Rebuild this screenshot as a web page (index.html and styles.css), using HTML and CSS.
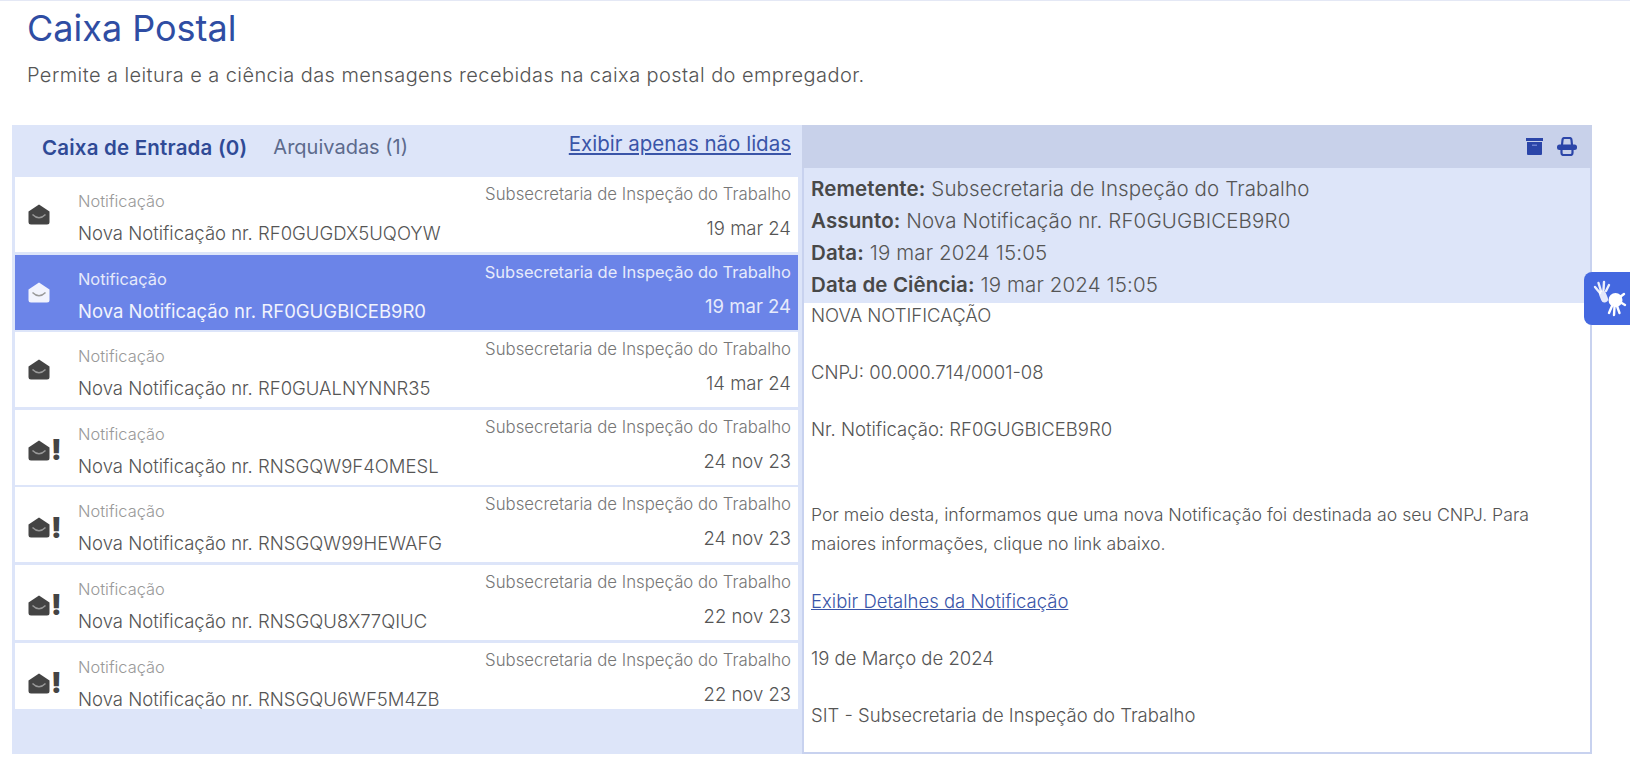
FILE: index.html
```html
<!DOCTYPE html>
<html lang="pt-BR">
<head>
	<meta charset="UTF-8">
	<title>Caixa Postal</title>
	<link rel="stylesheet" href="styles.css">
</head>
<body>
	<svg class="defs" width="0" height="0">
		<symbol id="env" viewBox="0 0 22 21">
			<path fill="currentColor" d="M11 0.5 L21.5 7.5 V18 a2.5 2.5 0 0 1 -2.5 2.5 H3 A2.5 2.5 0 0 1 0.5 18 V7.5 Z"/>
			<path class="env-v" fill="none" stroke-width="1.5" d="M4.5 10.5 Q11 17 17.5 10.5"/>
		</symbol>
	</svg>
	<header class="page-head">
		<h1>Caixa Postal</h1>
		<p>Permite a leitura e a ciência das mensagens recebidas na caixa postal do empregador.</p>
	</header>
	<main class="mailbox">
		<section class="inbox">
			<div class="tabs">
				<a class="tab active">Caixa de Entrada (0)</a>
				<a class="tab">Arquivadas (1)</a>
				<a class="only-unread">Exibir apenas não lidas</a>
			</div>
			<ul class="msg-list">
				<li class="msg">
					<span class="msg-icon"><svg><use href="#env"/></svg></span>
					<div class="msg-main"><span class="kind">Notificação</span><span class="subject">Nova Notificação nr. RF0GUGDX5UQOYW</span></div>
					<div class="msg-side"><span class="from">Subsecretaria de Inspeção do Trabalho</span><span class="date">19 mar 24</span></div>
				</li>
				<li class="msg selected">
					<span class="msg-icon"><svg><use href="#env"/></svg></span>
					<div class="msg-main"><span class="kind">Notificação</span><span class="subject">Nova Notificação nr. RF0GUGBICEB9R0</span></div>
					<div class="msg-side"><span class="from">Subsecretaria de Inspeção do Trabalho</span><span class="date">19 mar 24</span></div>
				</li>
				<li class="msg">
					<span class="msg-icon"><svg><use href="#env"/></svg></span>
					<div class="msg-main"><span class="kind">Notificação</span><span class="subject">Nova Notificação nr. RF0GUALNYNNR35</span></div>
					<div class="msg-side"><span class="from">Subsecretaria de Inspeção do Trabalho</span><span class="date">14 mar 24</span></div>
				</li>
				<li class="msg alert">
					<span class="msg-icon"><svg><use href="#env"/></svg><b>!</b></span>
					<div class="msg-main"><span class="kind">Notificação</span><span class="subject">Nova Notificação nr. RNSGQW9F4OMESL</span></div>
					<div class="msg-side"><span class="from">Subsecretaria de Inspeção do Trabalho</span><span class="date">24 nov 23</span></div>
				</li>
				<li class="msg alert">
					<span class="msg-icon"><svg><use href="#env"/></svg><b>!</b></span>
					<div class="msg-main"><span class="kind">Notificação</span><span class="subject">Nova Notificação nr. RNSGQW99HEWAFG</span></div>
					<div class="msg-side"><span class="from">Subsecretaria de Inspeção do Trabalho</span><span class="date">24 nov 23</span></div>
				</li>
				<li class="msg alert">
					<span class="msg-icon"><svg><use href="#env"/></svg><b>!</b></span>
					<div class="msg-main"><span class="kind">Notificação</span><span class="subject">Nova Notificação nr. RNSGQU8X77QIUC</span></div>
					<div class="msg-side"><span class="from">Subsecretaria de Inspeção do Trabalho</span><span class="date">22 nov 23</span></div>
				</li>
				<li class="msg alert">
					<span class="msg-icon"><svg><use href="#env"/></svg><b>!</b></span>
					<div class="msg-main"><span class="kind">Notificação</span><span class="subject">Nova Notificação nr. RNSGQU6WF5M4ZB</span></div>
					<div class="msg-side"><span class="from">Subsecretaria de Inspeção do Trabalho</span><span class="date">22 nov 23</span></div>
				</li>
			</ul>
		</section>
		<section class="reader">
			<div class="toolbar">
				<svg class="tool-archive" viewBox="0 0 17 17"><path fill="currentColor" d="M0 0 H17 V3 H0 Z M1 4 H16 V16 a1 1 0 0 1 -1 1 H2 a1 1 0 0 1 -1 -1 Z"/><rect x="6" y="6.5" width="5" height="1.5" fill="#6c80d0"/></svg>
				<svg class="tool-print" viewBox="0 0 20 19"><g fill="none" stroke="currentColor" stroke-width="2.2"><path d="M5 8 L5.5 3 a2 2 0 0 1 2 -2 H12.5 a2 2 0 0 1 2 2 L15 8"/><path d="M4.5 13 V16 a2 2 0 0 0 2 2 H13.5 a2 2 0 0 0 2 -2 V13"/></g><rect y="7.5" width="20" height="5.5" rx="2.5" fill="currentColor"/></svg>
			</div>
			<div class="meta">
				<div><b>Remetente:</b> Subsecretaria de Inspeção do Trabalho</div>
				<div><b>Assunto:</b> Nova Notificação nr. RF0GUGBICEB9R0</div>
				<div><b>Data:</b> 19 mar 2024 15:05</div>
				<div><b>Data de Ciência:</b> 19 mar 2024 15:05</div>
			</div>
			<div class="body-text">
				<p>NOVA NOTIFICAÇÃO</p>
				<p>CNPJ: 00.000.714/0001-08</p>
				<p class="wide-gap">Nr. Notificação: RF0GUGBICEB9R0</p>
				<p class="long">Por meio desta, informamos que uma nova Notificação foi destinada ao seu CNPJ. Para maiores informações, clique no link abaixo.</p>
				<p><a>Exibir Detalhes da Notificação</a></p>
				<p>19 de Março de 2024</p>
				<p>SIT - Subsecretaria de Inspeção do Trabalho</p>
			</div>
		</section>
	</main>
	<div class="libras">
		<svg viewBox="0 0 40 45" width="40" height="45">
			<g fill="none" stroke="#fff" stroke-linecap="round">
				<path stroke-width="2.4" opacity="0.9" d="M10 17 L5 11 M11 15 L8.5 7 M13.5 14 L14 6 M16 15 L19 9"/>
				<path stroke-width="7" opacity="0.85" d="M12.5 18 L14.5 23"/>
				<path stroke-width="2.4" d="M22 30 L19 37 M24.5 31 L24 39 M27 30 L29.5 37 M30 26 L35 29 M30 21 L34 18"/>
			</g>
			<circle cx="25.5" cy="24" r="7" fill="#fff"/>
		</svg>
	</div>
</body>
</html>
```

FILE: styles.css
```css
* {
	box-sizing: border-box;
}
body {
	margin: 0;
	height: 761px;
	overflow: hidden;
	font-family: "Inter", "Liberation Sans", sans-serif;
	color: #6c6c6c;
	background: #fff;
	border-top: 1px solid #e4e8f5;
}
.defs {
	display: none;
}
.page-head {
	height: 124px;
	padding: 5px 0 0 27px;
}
.page-head h1 {
	margin: 0;
	font-size: 36px;
	font-weight: 400;
	line-height: 44px;
	color: #2f4da3;
}
.page-head p {
	margin: 13px 0 0;
	font-size: 20px;
	letter-spacing: 0.42px;
	font-weight: 300;
	line-height: 24px;
	color: #555;
}
.mailbox {
	display: flex;
	width: 1580px;
	height: 629px;
	margin-left: 12px;
}
.inbox {
	width: 790px;
	background: #dde5f9;
	padding-left: 3px;
}
.tabs {
	display: flex;
	align-items: center;
	height: 52px;
	padding: 0 11px 8px 27px;
	font-size: 20px;
}
.tab {
	margin-right: 26px;
	color: #5c6a8c;
}
.tab.active {
	font-weight: 600;
	font-size: 20.5px;
	letter-spacing: 0.2px;
	color: #2f4a96;
}
.only-unread {
	margin: -8px 0 0 auto;
	font-size: 20.5px;
	color: #3a55a8;
	text-decoration: underline;
}
.msg-list {
	list-style: none;
	margin: 0;
	padding: 0;
	width: 783px;
	height: 532px;
	overflow: hidden;
}
.msg {
	display: flex;
	height: 75px;
	margin-bottom: 2.6px;
	background: #fff;
}
.msg.selected {
	background: #6b84e8;
	color: #fff;
}
.msg-icon {
	display: flex;
	align-items: center;
	width: 63px;
	padding: 0 0 0 13px;
	color: #444;
}
.alert .msg-icon {
	padding-top: 6px;
}
.msg-icon svg {
	width: 22px;
	height: 21px;
}
.msg-icon b {
	margin-left: 1px;
	font-size: 28px;
	line-height: 22px;
	font-weight: 900;
}
.env-v {
	stroke: #999;
}
.selected .msg-icon {
	color: #f1f3fd;
}
.selected .env-v {
	stroke: #b3b9ef;
}
.msg-main, .msg-side {
	display: flex;
	flex-direction: column;
}
.msg-main {
	flex: 1;
	padding-top: 12px;
}
.kind {
	font-size: 16.4px;
	font-weight: 300;
	line-height: 24px;
	color: #999;
}
.subject {
	margin-top: 9px;
	font-size: 18.5px;
	font-weight: 300;
	line-height: 22px;
	color: #555;
}
.selected .subject {
	font-weight: 400;
	color: #f1f3fd;
}
.msg-side {
	align-items: flex-end;
	padding: 5px 7px 0 0;
}
.from {
	font-size: 16.8px;
	font-weight: 300;
	line-height: 24px;
	color: #777;
}
.date {
	margin-top: 10px;
	font-size: 18.5px;
	font-weight: 300;
	line-height: 24px;
	color: #555;
}
.selected .kind, .selected .from, .selected .date {
	font-weight: 400;
	color: #e6eafb;
}
.selected .from {
	font-size: 16.5px;
}
.reader {
	width: 790px;
	border: solid #c8d2ef;
	border-width: 0 2px 2px;
}
.toolbar {
	display: flex;
	justify-content: flex-end;
	align-items: center;
	gap: 14px;
	height: 43px;
	margin: 0 -2px;
	padding-right: 15px;
	background: #c8d1ea;
	color: #2b45a8;
}
.tool-archive {
	width: 17px;
	height: 17px;
}
.tool-print {
	width: 20px;
	height: 19px;
}
.meta {
	height: 135px;
	padding: 5px 7px 0;
	background: #dde5f9;
	font-size: 20.5px;
	letter-spacing: 0.12px;
	font-weight: 300;
	line-height: 32px;
	color: #555;
}
.meta b {
	font-weight: 600;
	color: #484848;
}
.body-text {
	padding: 0 7px;
	margin-top: -2px;
	font-size: 18.5px;
	font-weight: 300;
	line-height: 28.6px;
	color: #555;
}
.body-text p {
	margin: 0 0 28.6px;
}
.body-text p.long {
	font-size: 17.7px;
}
.body-text p.wide-gap {
	margin-bottom: 57.2px;
}
.body-text a {
	color: #3a55a8;
	text-decoration: underline;
}
.libras {
	position: absolute;
	left: 1584px;
	top: 272px;
	display: flex;
	align-items: center;
	justify-content: flex-end;
	width: 46px;
	height: 53px;
	border-radius: 8px 0 0 8px;
	background: #4468e0;
}
```
